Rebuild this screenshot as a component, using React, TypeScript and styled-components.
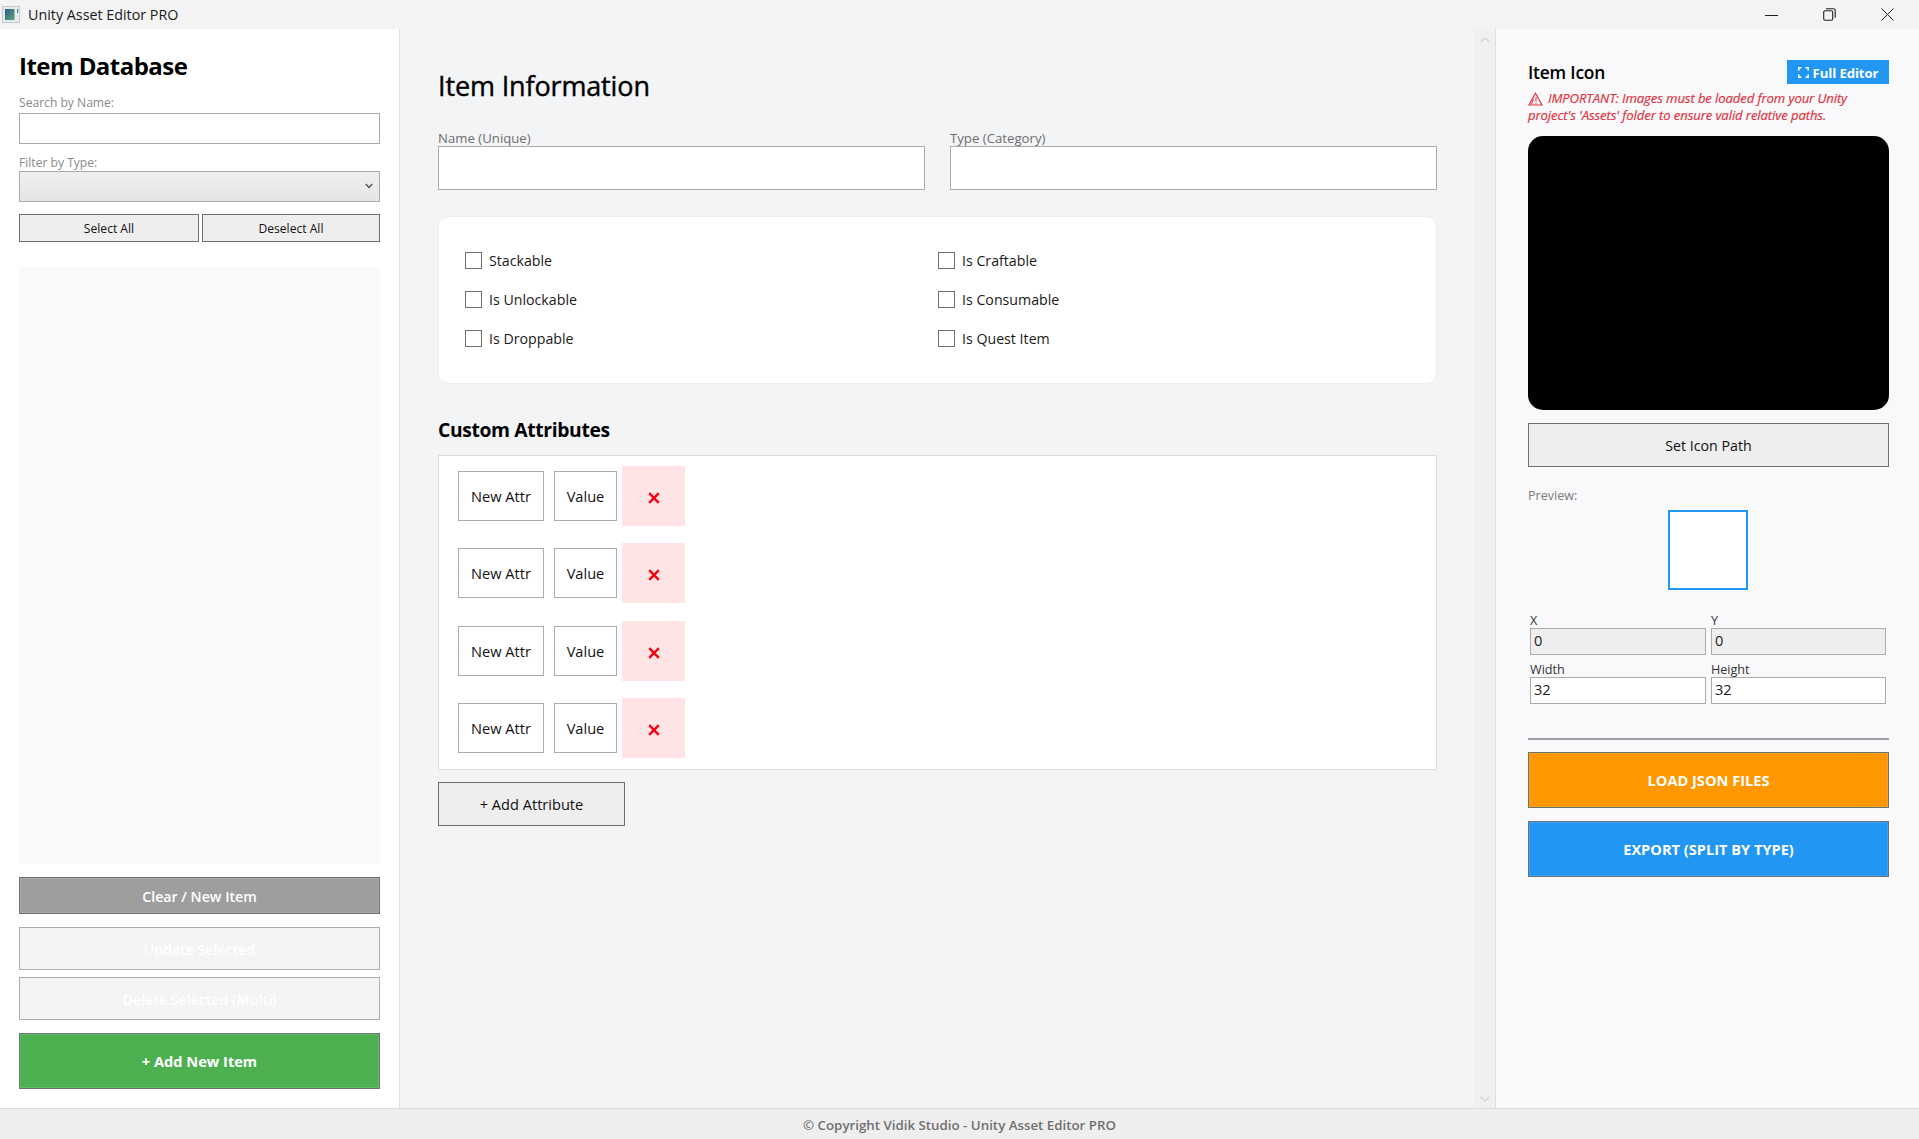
import React from "react";
import styled, { createGlobalStyle, css } from "styled-components";

const Global = createGlobalStyle`
  html, body { margin: 0; padding: 0; background: #f3f3f3; }
  * { box-sizing: border-box; }
  body { font-family: "Open Sans", "Noto Sans", sans-serif; color: #000; }
`;

const Window = styled.div`
  width: 1919px;
  height: 1139px;
  display: flex;
  flex-direction: column;
  overflow: hidden;
`;

const TitleBar = styled.header`
  height: 29px;
  flex: none;
  display: flex;
  align-items: center;
  background: #f3f3f3;
  padding-left: 2px;
`;
const AppTitle = styled.span`
  margin-left: 8px;
  font-size: 14.3px;
  line-height: 29px;
  color: #1a1a1a;
`;
const WinControls = styled.div`
  margin-left: auto;
  display: flex;
  align-items: center;
  padding-right: 25px;
  gap: 45px;
  height: 29px;
`;

const Main = styled.main`
  flex: 1;
  display: flex;
  min-height: 0;
`;

const LeftPanel = styled.aside`
  width: 400px;
  flex: none;
  background: #fff;
  border-right: 1px solid #e0e0e0;
  padding: 18px 19px 19px;
  display: flex;
  flex-direction: column;
`;
const DbTitle = styled.h1`
  margin: 0;
  font-size: 24px;
  font-weight: 700;
  line-height: 38px;
  letter-spacing: -0.54px;
`;
const FieldLabel = styled.label<{ $mt?: number; $lh: number }>`
  display: block;
  font-size: 12.1px;
  line-height: ${(p) => p.$lh}px;
  height: 18px;
  color: #8a8a8a;
  margin-top: ${(p) => p.$mt ?? 0}px;
`;
const TextInput = styled.input<{ $h?: number }>`
  display: block;
  width: 100%;
  height: ${(p) => p.$h ?? 31}px;
  border: 1px solid #ababab;
  background: #fff;
  outline: none;
  padding: 0 3px;
  font: inherit;
`;
const ComboWrap = styled.div`
  position: relative;
  height: 31px;
`;
const Combo = styled.select`
  appearance: none;
  display: block;
  width: 100%;
  height: 31px;
  border: 1px solid #acacac;
  border-radius: 0;
  background: linear-gradient(#f0f0f0, #e5e5e5);
  outline: none;
`;
const ComboArrow = styled.svg`
  position: absolute;
  right: 7px;
  top: 12px;
`;
const ButtonRow = styled.div`
  display: flex;
  gap: 3px;
  margin-top: 12px;
`;

type Tone = "plain" | "gray" | "disabled" | "green" | "orange" | "blue";
const toneStyles: Record<Tone, ReturnType<typeof css>> = {
  plain: css`background: #eeeeee; border-color: #707070; color: #111; font-weight: 400;`,
  gray: css`background: #9e9e9e; border-color: #707070; color: #fff; font-weight: 600; box-shadow: inset 0 0 0 1px #a8a8a8;`,
  disabled: css`background: #f4f4f4; border-color: #adadad; color: #fff; font-weight: 600;`,
  green: css`background: #4caf50; border-color: #707070; color: #fff; font-weight: 700; box-shadow: inset 0 0 0 1px #62bb66;`,
  orange: css`background: #ff9800; border-color: #707070; color: #fff; font-weight: 700; box-shadow: inset 0 0 0 1px #fba422;`,
  blue: css`background: #2196f3; border-color: #707070; color: #fff; font-weight: 700; box-shadow: inset 0 0 0 1px #3ba3f3;`,
};
const Btn = styled.button<{ $tone?: Tone; $h?: number; $w?: number; $mt?: number; $fs?: number; $pt?: number }>`
  display: block;
  width: ${(p) => (p.$w ? `${p.$w}px` : "100%")};
  height: ${(p) => p.$h ?? 44}px;
  margin-top: ${(p) => p.$mt ?? 0}px;
  border: 1px solid;
  border-radius: 0;
  padding: ${(p) => p.$pt ?? 0}px 0 0;
  font-family: inherit;
  font-size: ${(p) => p.$fs ?? 14.2}px;
  ${(p) => toneStyles[p.$tone ?? "plain"]}
`;
const SelectBtn = styled(Btn)<{ $grow: number }>`
  height: 28px;
  flex: ${(p) => p.$grow};
  width: auto;
  font-size: 12.1px;
`;
const ItemList = styled.div`
  flex: 1;
  margin-top: 25px;
  background: #f9f9f9;
`;

const CenterPanel = styled.section`
  flex: 1;
  min-width: 0;
  display: flex;
  background: #f3f4f6;
`;
const CenterContent = styled.div`
  flex: 1;
  min-width: 0;
  padding: 37px 37px 0 38px;
`;
const ItemInfoTitle = styled.h2`
  margin: 0;
  font-size: 27px;
  font-weight: 400;
  line-height: 40px;
  letter-spacing: -0.14px;
  -webkit-text-stroke: 0.4px #000;
`;
const NameGrid = styled.div`
  display: grid;
  grid-template-columns: 487px 487px;
  column-gap: 25px;
  margin-top: 24px;
`;
const NameLabel = styled.label`
  display: block;
  font-size: 13.2px;
  line-height: 16px;
  height: 16px;
  color: #6f6f6f;
  white-space: nowrap;
`;
const FlagsCard = styled.div`
  margin-top: 26px;
  height: 168px;
  background: #fff;
  border: 1px solid #eeeeee;
  border-radius: 11px;
  padding: 24px 0 0 26px;
  display: grid;
  grid-template-columns: 473px 1fr;
  grid-auto-rows: 39px;
`;
const FlagLabel = styled.label`
  display: flex;
  align-items: center;
  gap: 7px;
  font-size: 14.2px;
  color: #1a1a1a;
`;
const FlagBox = styled.input`
  appearance: none;
  margin: 0;
  width: 17px;
  height: 16.5px;
  border: 1px solid #707070;
  background: #fff;
  border-radius: 0;
`;
const SectionTitle = styled.h3`
  margin: 31px 0 0;
  font-size: 19.3px;
  font-weight: 700;
  line-height: 30px;
  letter-spacing: -0.35px;
`;
const AttrBox = styled.div`
  margin-top: 10px;
  height: 315px;
  background: #fff;
  border: 1px solid #dddddd;
  padding: 10px 19px;
  display: flex;
  flex-direction: column;
  gap: 17.33px;
`;
const AttrRow = styled.div`
  display: flex;
  align-items: center;
  height: 60px;
`;
const AttrInput = styled.input<{ $w: number; $mr: number }>`
  width: ${(p) => p.$w}px;
  margin-right: ${(p) => p.$mr}px;
  height: 50px;
  border: 1px solid #ababb3;
  background: #fff;
  outline: none;
  padding: 0;
  text-align: center;
  font-family: inherit;
  font-size: 14.6px;
  color: #111;
`;
const RemoveBtn = styled.button`
  width: 63px;
  height: 60px;
  border: none;
  padding: 4px 0 0;
  background: #ffe4e6;
  display: flex;
  align-items: center;
  justify-content: center;
`;

const ScrollTrack = styled.div`
  width: 21px;
  flex: none;
  background: #f0f0f0;
  display: flex;
  flex-direction: column;
  justify-content: space-between;
  align-items: center;
  padding: 8px 0 6px;
`;

const RightPanel = styled.aside`
  width: 424px;
  flex: none;
  background: #f9f9fb;
  border-left: 1px solid #dedede;
  padding: 31px 30px 0 32px;
`;
const IconHeader = styled.div`
  display: flex;
  justify-content: space-between;
  align-items: center;
  height: 24px;
`;
const IconTitle = styled.h3`
  margin: 0;
  font-size: 17.4px;
  font-weight: 600;
  letter-spacing: -0.2px;
`;
const FullEditorBtn = styled.button`
  width: 102px;
  height: 24px;
  background: #2196f3;
  border: none;
  color: #fff;
  padding: 1px 0 0;
  font-family: inherit;
  font-size: 13.2px;
  font-weight: 700;
  letter-spacing: -0.1px;
  display: flex;
  align-items: center;
  justify-content: center;
  gap: 4px;
`;
const Warning = styled.p`
  margin: 6px 0 0;
  font-size: 13.1px;
  line-height: 17px;
  font-style: italic;
  font-weight: 400;
  letter-spacing: -0.1px;
  -webkit-text-stroke: 0.2px #e0353f;
  color: #e0353f;
  white-space: nowrap;
`;
const WarnIcon = styled.svg`
  vertical-align: -3px;
  margin-right: 5px;
`;
const BlackPreview = styled.div`
  margin-top: 12px;
  height: 274px;
  background: #000;
  border-radius: 15px;
`;
const PreviewLabel = styled.div`
  margin-top: 19px;
  height: 18px;
  font-size: 12.6px;
  line-height: 20px;
  color: #7a7a7a;
`;
const PreviewBox = styled.div`
  margin: 6px 0 0 140px;
  width: 80px;
  height: 80px;
  background: #fff;
  border: 2px solid #2196f3;
`;
const CropGrid = styled.div`
  margin-top: 23px;
  padding: 0 3px 0 2px;
  display: grid;
  grid-template-columns: 176px 175px;
  column-gap: 5px;
  row-gap: 7px;
`;
const CropField = styled.div``;
const CropLabel = styled.label`
  display: block;
  height: 15px;
  font-size: 12.6px;
  line-height: 15px;
  color: #333;
`;
const CropInput = styled.input<{ $locked?: boolean }>`
  display: block;
  width: 100%;
  height: 27px;
  border: 1px solid #ababab;
  outline: none;
  padding: 0 3px 4px;
  font-family: inherit;
  font-size: 14.6px;
  color: #222;
  background: ${(p) => (p.$locked ? "#eeeeee" : "#fff")};
`;
const Divider = styled.hr`
  margin: 34px 0 0;
  height: 2px;
  border: none;
  background: #a0a0a4;
`;

const Footer = styled.footer`
  height: 31px;
  flex: none;
  background: #eeeeee;
  border-top: 1px solid #dddddd;
  display: flex;
  align-items: center;
  justify-content: center;
  padding: 2px 0 0;
  font-size: 13.3px;
  font-weight: 600;
  color: #707070;
`;

const RemoveIcon = () => (
  <svg width="12" height="12" viewBox="0 0 12 12">
    <path d="M1.2 1.2L10.8 10.8M10.8 1.2L1.2 10.8" stroke="#f5000f" strokeWidth="2.4" fill="none" />
  </svg>
);

const AppIcon = () => (
  <svg width="18" height="17" viewBox="0 0 18 17">
    <defs>
      <linearGradient id="appIconFill" x1="0" y1="0" x2="1" y2="1">
        <stop offset="0" stopColor="#2f5f86" />
        <stop offset="1" stopColor="#5fa07a" />
      </linearGradient>
    </defs>
    <rect x="0.5" y="0.5" width="17" height="16" fill="#e6eaee" stroke="#c4c9ce" />
    <rect x="3" y="3" width="9.5" height="11" fill="url(#appIconFill)" />
    <rect x="15" y="3" width="1.2" height="4" fill="#4a8a80" />
  </svg>
);

const flags = [
  "Stackable",
  "Is Craftable",
  "Is Unlockable",
  "Is Consumable",
  "Is Droppable",
  "Is Quest Item",
];

export default function App() {
  return (
    <Window>
      <Global />
      <TitleBar>
        <AppIcon />
        <AppTitle>Unity Asset Editor PRO</AppTitle>
        <WinControls>
          <svg width="13" height="12" viewBox="0 0 13 12">
            <path d="M0 6.5H13" stroke="#222" strokeWidth="1" />
          </svg>
          <svg width="13" height="13" viewBox="0 0 13 13" fill="none">
            <rect x="0.7" y="2.7" width="9" height="9.6" rx="1.6" stroke="#222" strokeWidth="1.1" />
            <path d="M3 0.8H10.4C11.5 0.8 12.2 1.5 12.2 2.6V9.8" stroke="#222" strokeWidth="1.1" />
          </svg>
          <svg width="13" height="13" viewBox="0 0 13 13">
            <path d="M0.5 0.5L12.5 12.5M12.5 0.5L0.5 12.5" stroke="#222" strokeWidth="1" fill="none" />
          </svg>
        </WinControls>
      </TitleBar>
      <Main>
        <LeftPanel>
          <DbTitle>Item Database</DbTitle>
          <FieldLabel $mt={10} $lh={16}>Search by Name:</FieldLabel>
          <TextInput />
          <FieldLabel $mt={9} $lh={19}>Filter by Type:</FieldLabel>
          <ComboWrap>
            <Combo />
            <ComboArrow width="8" height="6" viewBox="0 0 8 6">
              <path d="M0.8 1L4 4.4L7.2 1" stroke="#555" strokeWidth="1.5" fill="none" />
            </ComboArrow>
          </ComboWrap>
          <ButtonRow>
            <SelectBtn $grow={180}>Select All</SelectBtn>
            <SelectBtn $grow={178}>Deselect All</SelectBtn>
          </ButtonRow>
          <ItemList />
          <Btn $tone="gray" $h={37} $mt={13} $pt={2}>Clear / New Item</Btn>
          <Btn $tone="disabled" $h={43} $mt={13} $pt={2}>Update Selected</Btn>
          <Btn $tone="disabled" $h={43} $mt={7} $pt={2}>Delete Selected (Multi)</Btn>
          <Btn $tone="green" $h={56} $mt={13} $fs={14.6}>+ Add New Item</Btn>
        </LeftPanel>
        <CenterPanel>
          <CenterContent>
            <ItemInfoTitle>Item Information</ItemInfoTitle>
            <NameGrid>
              <div>
                <NameLabel>Name (Unique)</NameLabel>
                <TextInput $h={44} />
              </div>
              <div>
                <NameLabel>Type (Category)</NameLabel>
                <TextInput $h={44} />
              </div>
            </NameGrid>
            <FlagsCard>
              {flags.map((f) => (
                <FlagLabel key={f}>
                  <FlagBox type="checkbox" />
                  {f}
                </FlagLabel>
              ))}
            </FlagsCard>
            <SectionTitle>Custom Attributes</SectionTitle>
            <AttrBox>
              {[0, 1, 2, 3].map((i) => (
                <AttrRow key={i}>
                  <AttrInput $w={86} $mr={10} defaultValue="New Attr" />
                  <AttrInput $w={63} $mr={5} defaultValue="Value" />
                  <RemoveBtn aria-label="Remove attribute">
                    <RemoveIcon />
                  </RemoveBtn>
                </AttrRow>
              ))}
            </AttrBox>
            <Btn $w={187} $h={44} $mt={12} $fs={14.6}>+ Add Attribute</Btn>
          </CenterContent>
          <ScrollTrack>
            <svg width="10" height="6" viewBox="0 0 10 6">
              <path d="M0.5 5.2L5 1L9.5 5.2" stroke="#d6d6d6" strokeWidth="1.5" fill="none" />
            </svg>
            <svg width="10" height="6" viewBox="0 0 10 6">
              <path d="M0.5 0.8L5 5L9.5 0.8" stroke="#d6d6d6" strokeWidth="1.5" fill="none" />
            </svg>
          </ScrollTrack>
        </CenterPanel>
        <RightPanel>
          <IconHeader>
            <IconTitle>Item Icon</IconTitle>
            <FullEditorBtn>
              <svg width="11" height="11" viewBox="0 0 11 11" fill="none" stroke="#fff" strokeWidth="1.6">
                <path d="M0.8 3.5V0.8H3.5M7.5 0.8H10.2V3.5M10.2 7.5V10.2H7.5M3.5 10.2H0.8V7.5" />
              </svg>
              Full Editor
            </FullEditorBtn>
          </IconHeader>
          <Warning>
            <WarnIcon width="15" height="14" viewBox="0 0 15 14" fill="none" stroke="#e0353f">
              <path d="M7.5 1.2L14 13H1L7.5 1.2Z" strokeWidth="1.2" />
              <path d="M8 5V10M8 11V12.5M5.5 7L3.5 12" strokeWidth="1" />
            </WarnIcon>
            IMPORTANT: Images must be loaded from your Unity
            <br />
            project's 'Assets' folder to ensure valid relative paths.
          </Warning>
          <BlackPreview />
          <Btn $h={44} $mt={13}>Set Icon Path</Btn>
          <PreviewLabel>Preview:</PreviewLabel>
          <PreviewBox />
          <CropGrid>
            <CropField>
              <CropLabel>X</CropLabel>
              <CropInput $locked defaultValue="0" />
            </CropField>
            <CropField>
              <CropLabel>Y</CropLabel>
              <CropInput $locked defaultValue="0" />
            </CropField>
            <CropField>
              <CropLabel>Width</CropLabel>
              <CropInput defaultValue="32" />
            </CropField>
            <CropField>
              <CropLabel>Height</CropLabel>
              <CropInput defaultValue="32" />
            </CropField>
          </CropGrid>
          <Divider />
          <Btn $tone="orange" $h={56} $mt={12} $fs={14.6}>LOAD JSON FILES</Btn>
          <Btn $tone="blue" $h={56} $mt={13} $fs={14.6}>EXPORT (SPLIT BY TYPE)</Btn>
        </RightPanel>
      </Main>
      <Footer>© Copyright Vidik Studio - Unity Asset Editor PRO</Footer>
    </Window>
  );
}
